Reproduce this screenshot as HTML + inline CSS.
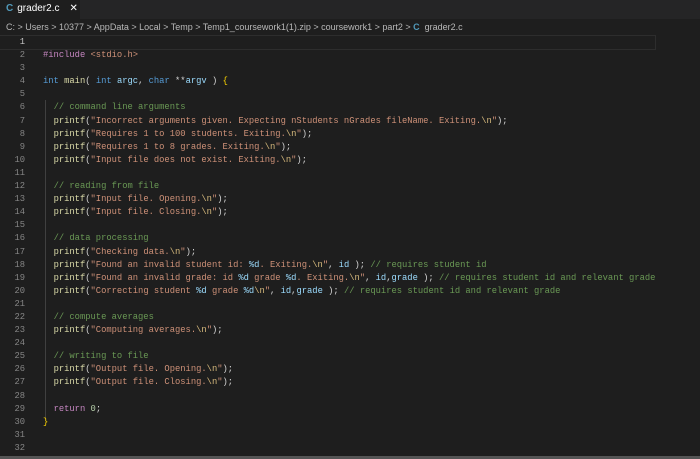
<!DOCTYPE html><html><head><style>
body{margin:0;width:700px;height:459px;background:#1e1e1e;overflow:hidden;font-family:"Liberation Sans",sans-serif;position:relative}
.tabs{position:absolute;left:0;top:0;width:700px;height:19px;background:#252526}
.tab{position:absolute;left:0;top:0;width:80px;height:19px;background:#1e1e1e;color:#fff;font-size:10px;line-height:17px;white-space:nowrap}
.bc{position:absolute;left:6px;top:20px;color:#b8b8b8;font-size:9px;line-height:14px;white-space:pre}
.c{color:#519aba;font-weight:bold}
.code{position:absolute;left:0;top:36px;font-family:"Liberation Mono",monospace;font-size:8.8px;line-height:13.1px;white-space:pre;color:#d4d4d4}
.ln{display:inline-block;width:25px;text-align:right;color:#858585;margin-right:18px}
.cur .ln{color:#c6c6c6}
.cur{outline:1px solid #2d2d2d}
.k{color:#569cd6}.f{color:#dcdcaa}.s{color:#ce9178}.m{color:#6a9955}.n{color:#b5cea8}.v{color:#9cdcfe}.p{color:#c586c0}.b{color:#ffd700}.e{color:#d7ba7d}
.guide{position:absolute;left:45px;top:100px;width:1px;height:321px;background:#404040}
.bot{position:absolute;left:0;top:456px;width:700px;height:3px;background:#555}
</style></head><body>
<div class="tabs"><div class="tab"><span class="c" style="margin:0 4px 0 6px">C</span>grader2.c<span style="margin-left:10px;font-size:10px">✕</span></div></div>
<div class="bc">C: &gt; Users &gt; 10377 &gt; AppData &gt; Local &gt; Temp &gt; Temp1_coursework1(1).zip &gt; coursework1 &gt; part2 &gt; <span class="c">C</span>  grader2.c</div>
<div class="guide"></div>
<div class="code"><div class="cur"><span class="ln">1</span> </div><div><span class="ln">2</span><span class="p">#include</span> <span class="s">&lt;stdio.h&gt;</span></div><div><span class="ln">3</span></div><div><span class="ln">4</span><span class="k">int</span> <span class="f">main</span>( <span class="k">int</span> <span class="v">argc</span>, <span class="k">char</span> **<span class="v">argv</span> ) <span class="b">{</span></div><div><span class="ln">5</span></div><div><span class="ln">6</span>  <span class="m">// command line arguments</span></div><div><span class="ln">7</span>  <span class="f">printf</span>(<span class="s">"Incorrect arguments given. Expecting nStudents nGrades fileName. Exiting.</span><span class="e">\n</span><span class="s">"</span>);</div><div><span class="ln">8</span>  <span class="f">printf</span>(<span class="s">"Requires 1 to 100 students. Exiting.</span><span class="e">\n</span><span class="s">"</span>);</div><div><span class="ln">9</span>  <span class="f">printf</span>(<span class="s">"Requires 1 to 8 grades. Exiting.</span><span class="e">\n</span><span class="s">"</span>);</div><div><span class="ln">10</span>  <span class="f">printf</span>(<span class="s">"Input file does not exist. Exiting.</span><span class="e">\n</span><span class="s">"</span>);</div><div><span class="ln">11</span></div><div><span class="ln">12</span>  <span class="m">// reading from file</span></div><div><span class="ln">13</span>  <span class="f">printf</span>(<span class="s">"Input file. Opening.</span><span class="e">\n</span><span class="s">"</span>);</div><div><span class="ln">14</span>  <span class="f">printf</span>(<span class="s">"Input file. Closing.</span><span class="e">\n</span><span class="s">"</span>);</div><div><span class="ln">15</span></div><div><span class="ln">16</span>  <span class="m">// data processing</span></div><div><span class="ln">17</span>  <span class="f">printf</span>(<span class="s">"Checking data.</span><span class="e">\n</span><span class="s">"</span>);</div><div><span class="ln">18</span>  <span class="f">printf</span>(<span class="s">"Found an invalid student id: </span><span class="v">%d</span><span class="s">. Exiting.</span><span class="e">\n</span><span class="s">"</span>, <span class="v">id</span> ); <span class="m">// requires student id</span></div><div><span class="ln">19</span>  <span class="f">printf</span>(<span class="s">"Found an invalid grade: id </span><span class="v">%d</span><span class="s"> grade </span><span class="v">%d</span><span class="s">. Exiting.</span><span class="e">\n</span><span class="s">"</span>, <span class="v">id</span>,<span class="v">grade</span> ); <span class="m">// requires student id and relevant grade</span></div><div><span class="ln">20</span>  <span class="f">printf</span>(<span class="s">"Correcting student </span><span class="v">%d</span><span class="s"> grade </span><span class="v">%d</span><span class="e">\n</span><span class="s">"</span>, <span class="v">id</span>,<span class="v">grade</span> ); <span class="m">// requires student id and relevant grade</span></div><div><span class="ln">21</span></div><div><span class="ln">22</span>  <span class="m">// compute averages</span></div><div><span class="ln">23</span>  <span class="f">printf</span>(<span class="s">"Computing averages.</span><span class="e">\n</span><span class="s">"</span>);</div><div><span class="ln">24</span></div><div><span class="ln">25</span>  <span class="m">// writing to file</span></div><div><span class="ln">26</span>  <span class="f">printf</span>(<span class="s">"Output file. Opening.</span><span class="e">\n</span><span class="s">"</span>);</div><div><span class="ln">27</span>  <span class="f">printf</span>(<span class="s">"Output file. Closing.</span><span class="e">\n</span><span class="s">"</span>);</div><div><span class="ln">28</span></div><div><span class="ln">29</span>  <span class="p">return</span> <span class="n">0</span>;</div><div><span class="ln">30</span><span class="b">}</span></div><div><span class="ln">31</span></div><div><span class="ln">32</span></div></div>
<div class="bot"></div>
</body></html>
